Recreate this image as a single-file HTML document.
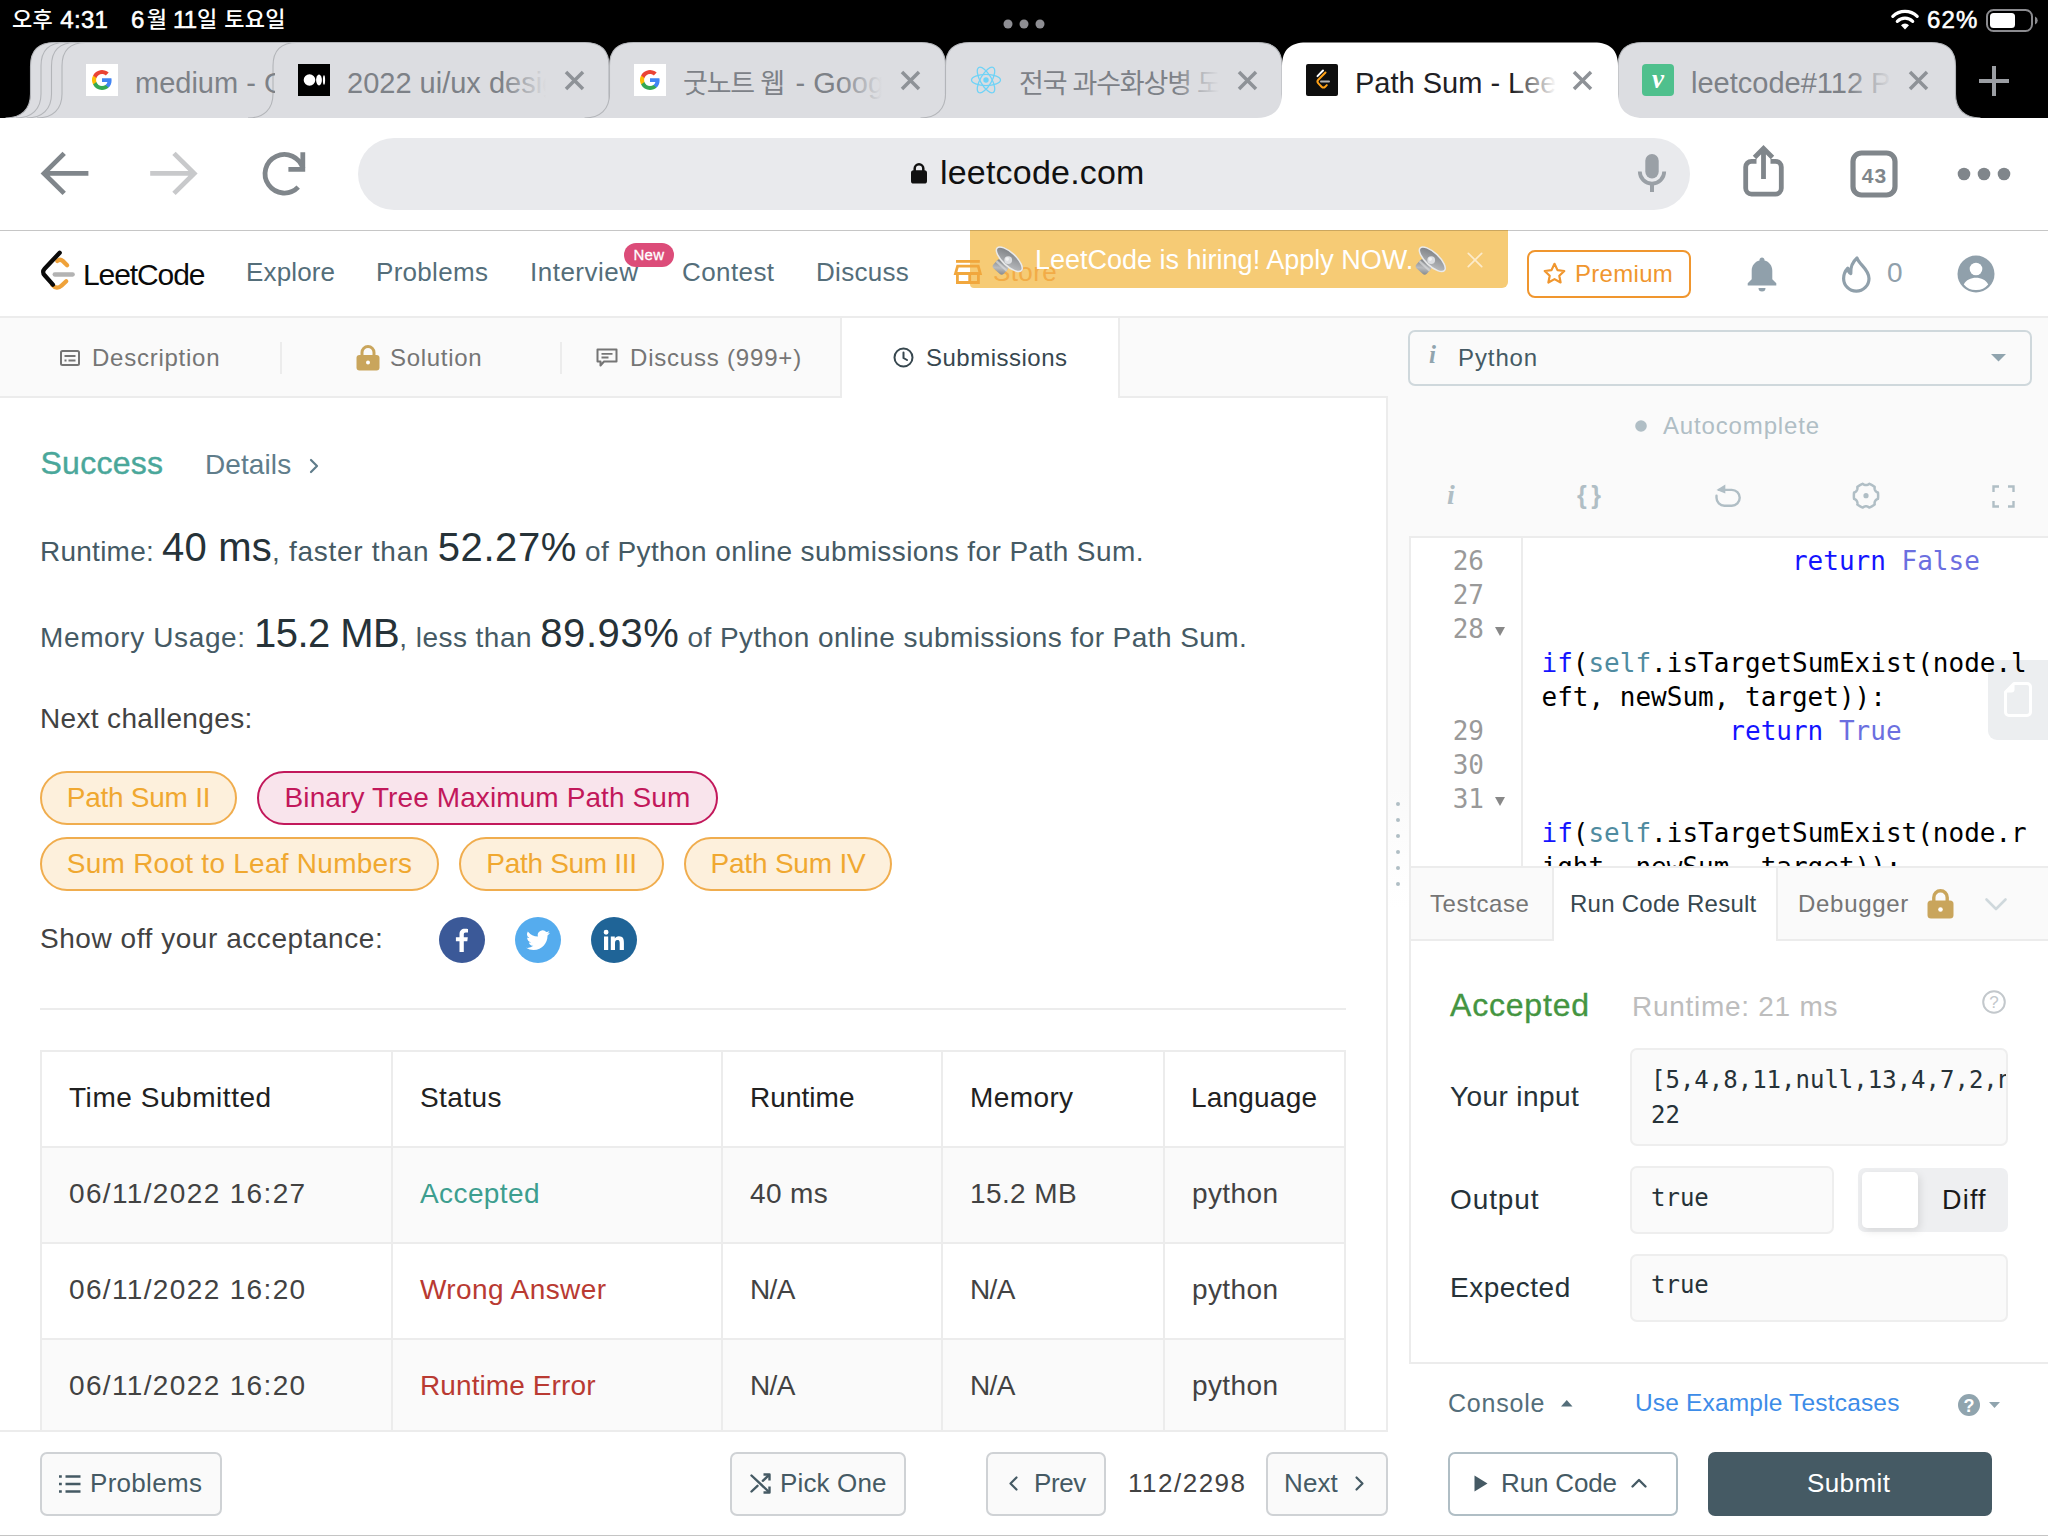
<!DOCTYPE html>
<html lang="ko">
<head>
<meta charset="utf-8">
<title>Path Sum - LeetCode</title>
<style>
*{box-sizing:border-box;margin:0;padding:0}
html,body{width:2048px;height:1536px;overflow:hidden;background:#fff}
body{font-family:"Liberation Sans","Noto Sans CJK KR",sans-serif;color:#263238;position:relative}
.abs{position:absolute}
.t{position:absolute;white-space:nowrap;line-height:1}
svg{position:absolute;overflow:visible}

/* ---------- status bar + tab strip ---------- */
#strip{left:0;top:0;width:2048px;height:118px;background:#000}
.sb{color:#fff;font-size:24px;line-height:32px;word-spacing:-1px}
.sb .ko{font-size:22px;font-weight:500;letter-spacing:.15px;position:relative;top:-1px}
.sb .dg{font-size:24px;-webkit-text-stroke:.55px #fff;letter-spacing:.3px}
.tab{position:absolute;top:42px;height:76px;width:337px}
.tab .fav{position:absolute;left:24px;top:22px;width:32px;height:32px}
.tab .tt{position:absolute;left:73px;top:22.500px;font-size:29px;line-height:36px;color:#7d8187;white-space:nowrap;width:205px;overflow:hidden}
.tab.act .tt{color:#1f2124}
.tab .tt .ko{font-size:27px;letter-spacing:-1.200px}
.tab .fade{position:absolute;left:230px;top:10px;width:52px;height:56px;background:linear-gradient(90deg,rgba(220,221,225,0),#dcdde1 85%)}
.tab.act .fade{background:linear-gradient(90deg,rgba(255,255,255,0),#fff 85%)}
.tab .x{left:291px;top:28px;width:21px;height:21px}
.tab .x path{stroke:#8e9297;stroke-width:3.500;stroke-linecap:butt;fill:none}

/* ---------- toolbar ---------- */
#toolbar{left:0;top:118px;width:2048px;height:113px;background:#fff;border-bottom:1px solid #c6c6c6}
#url{left:358px;top:138px;width:1332px;height:72px;border-radius:36px;background:#e9eaed}

/* ---------- leetcode navbar ---------- */
#lcnav{left:0;top:231px;width:2048px;height:87px;background:#fff;border-bottom:2px solid #ececec}
#lcword{font-size:30px;line-height:34px;color:#0a0a0a;letter-spacing:-1.1px}
.nv{top:257px;font-size:26px;line-height:30px;color:#546e7a}
#newbadge{left:624px;top:243px;width:50px;height:24px;border-radius:12px;background:#dc4c79;color:#fff;font-size:15px;line-height:24px;text-align:center;letter-spacing:.4px;-webkit-text-stroke:.3px #fff}
#banner{left:970px;top:230px;width:538px;height:58px;background:#f6cb75;border-radius:0 0 6px 4px;border-top:1.500px solid #cba65e}
#premium{left:1527px;top:249.500px;width:163.500px;height:48px;border:2.300px solid #f0962e;border-radius:8px}
/* ---------- problem tabs ---------- */
#ptabs{left:0;top:318px;width:1388px;height:80px;background:#fafafa;border-bottom:2px solid #ececec}
#ptabAct{left:840px;top:318px;width:280px;height:80px;background:#fff;border-left:2px solid #ececec;border-right:2px solid #ececec}
.vdiv{top:342px;width:2px;height:32px;background:#ececec}
.pt{top:344px;font-size:24px;line-height:28px;color:#757575}

/* ---------- left pane ---------- */
#leftpane{left:0;top:398px;width:1388px;height:1034px;background:#fff;border-right:2px solid #ececec}
.ln{font-size:28px;line-height:48px;color:#455a64;letter-spacing:.25px}
.ln b{font-weight:normal;font-size:40px;color:#263238;letter-spacing:.2px}
.pill{height:54px;border-radius:27px;border:2px solid #f0ad4e;background:#fdf0dc;color:#f0a830;font-size:28px;line-height:50px;text-align:center;white-space:nowrap;letter-spacing:.1px}
.pill.pk{border-color:#c2185b;background:#f9e4ec;color:#c2185b}
#tbl{left:40px;top:1050px;width:1306px;height:382px;overflow:hidden;border-left:2px solid #ececec;border-top:2px solid #ececec}
.tr{display:flex;height:96px;background:#fff;border-bottom:2px solid #ececec}
.tr.odd{background:#fafafa}
.td{height:96px;border-right:2px solid #ececec;padding-left:27px;font-size:28px;line-height:92px;color:#424242;white-space:nowrap;letter-spacing:.4px}
.th .td{color:#212121}
.c1{width:351px}.c2{width:330px}.c3{width:220px}.c4{width:222px}.c5{width:181px}
.dt{letter-spacing:1.35px}
.ac{color:#3d9e8f}.wa{color:#b93a32}

/* ---------- right pane ---------- */
#rightbg{left:1388px;top:318px;width:660px;height:1114px;background:linear-gradient(180deg,#fafafa 0,#fafafa 470px,#fff 590px,#fff 100%)}
#langsel{left:1408px;top:330px;width:624px;height:56px;border:2px solid #cfd8dc;border-radius:7px;background:#fafafa}
#editor{left:1409px;top:536px;width:660px;height:332px;background:#fff;border:2px solid #ececec;overflow:hidden}
#gutter{left:0;top:0;width:112px;height:340px;border-right:2px solid #ececec;background:#fff}
.gl,.cl{font-family:"DejaVu Sans Mono","Liberation Mono",monospace;font-size:26px;line-height:34px;white-space:pre}
.gl{left:0;width:73px;text-align:right;color:#999}
.fold{left:84px;width:0;height:0;border-left:5px solid transparent;border-right:5px solid transparent;border-top:9px solid #888}
.cl{left:130.500px;color:#000}
.kw{color:#1414ff}.cn{color:#6b6fe0}.sf{color:#4f8ba0}
#copybtn{left:577px;top:122px;width:70px;height:80px;background:#eceef0;border-radius:9px}

/* ---------- console ---------- */
#ctabs{left:1409px;top:866px;width:660px;height:75px;background:#fafafa;border:2px solid #ececec}
#ctabAct{left:1552px;top:868px;width:226px;height:75px;background:#fff;border-left:2px solid #ececec;border-right:2px solid #ececec}
#cpanel{left:1409px;top:941px;width:660px;height:423px;background:#fff;border-left:2px solid #ececec;border-bottom:2px solid #ececec}
.rl{font-size:28px;line-height:32px;color:#263238}
.box{background:#fafafa;border:2px solid #eeeeee;border-radius:7px}
.mono{font-family:"DejaVu Sans Mono","Liberation Mono",monospace;font-size:24px;line-height:36px;color:#263238}
#diff{left:1858px;top:1168px;width:150px;height:64px;background:#eeeff1;border-radius:7px}
#knob{left:1862px;top:1172px;width:56px;height:56px;background:#fff;border-radius:5px;box-shadow:2px 3px 8px rgba(0,0,0,.10)}
#cfoot{left:1388px;top:1364px;width:659px;height:68px;background:#fff}
/* ---------- bottom bar ---------- */
#bbar{left:0;top:1432px;width:2048px;height:104px;background:#fff}
#bbarline{left:0;top:1430px;width:1388px;height:2px;background:#ececec}
.btn{top:1452px;height:64px;background:#fafafa;border:2px solid #cfd2d5;border-radius:7px}
.bt{top:1466.500px;font-size:26px;line-height:32px;color:#455a64}
#runbtn{left:1448px;top:1452px;width:230px;height:64px;background:#fff;border:2px solid #b0bec5;border-radius:7px}
#submit{left:1708px;top:1452px;width:284px;height:64px;background:#455a64;border-radius:7px}
</style>
</head>
<body>

<!-- ================= iOS status bar + Chrome tab strip ================= -->
<div class="abs" id="strip"></div>
<div class="t sb" id="sb1" style="left:12px;top:4px"><span class="ko">오후</span><span class="dg" style="margin-left:7.500px">4:31</span></div>
<div class="t sb" id="sb2" style="left:131px;top:4px"><span class="dg">6</span><span class="ko" style="margin-left:2px">월</span><span class="dg" style="margin-left:6px;letter-spacing:-.9px">11</span><span class="ko" style="margin-left:.8px">일</span><span class="ko" style="margin-left:7px">토요일</span></div>
<svg style="left:1003px;top:19px" width="42" height="10"><circle cx="5" cy="5" r="4.5" fill="#8e8e93"/><circle cx="21" cy="5" r="4.5" fill="#8e8e93"/><circle cx="37" cy="5" r="4.5" fill="#8e8e93"/></svg>
<!-- wifi -->
<svg style="left:1891px;top:9px" width="28" height="21" viewBox="0 0 28 21"><path d="M14 20.5l4-4.3a5.6 5.6 0 0 0-8 0z" fill="#fff"/><path d="M6.3 12.4a10.9 10.9 0 0 1 15.4 0" stroke="#fff" stroke-width="3.2" fill="none" stroke-linecap="round"/><path d="M1.8 7.4a17.3 17.3 0 0 1 24.4 0" stroke="#fff" stroke-width="3.2" fill="none" stroke-linecap="round"/></svg>
<div class="t sb" id="sb3" style="left:1927px;top:4px"><span class="dg" style="letter-spacing:1.100px">62%</span></div>
<!-- battery -->
<svg style="left:1986px;top:9px" width="54" height="23" viewBox="0 0 54 23"><rect x="1" y="1" width="45" height="21" rx="6.5" fill="none" stroke="#8b8b8f" stroke-width="2"/><rect x="4" y="4" width="25" height="15" rx="3.5" fill="#fff"/><path d="M49 7.5v8a4.3 4.3 0 0 0 0-8z" fill="#8b8b8f"/></svg>

<!-- tab shapes -->
<svg style="left:0;top:42px" width="2048" height="76" viewBox="0 0 2048 76"><path d="M5.5 76C21.5 76 30.5 67 30.5 52V24C30.5 8 38.5 0.500 54.5 0.500H176C192 0.500 200 8 200 24V52C200 67 209 76 225 76" fill="#dcdde1" stroke="#b3b5b9" stroke-width="1.100"/><path d="M16 76C32 76 41 67 41 52V24C41 8 49 0.500 65 0.500H186C202 0.500 210 8 210 24V52C210 67 219 76 235 76" fill="#dcdde1" stroke="#b3b5b9" stroke-width="1.100"/><path d="M26.5 76C42.5 76 51.5 67 51.5 52V24C51.5 8 59.5 0.500 75.5 0.500H196C212 0.500 220 8 220 24V52C220 67 229 76 245 76" fill="#dcdde1" stroke="#b3b5b9" stroke-width="1.100"/><path d="M37 76C53 76 62 67 62 52V24C62 8 70 0.500 86 0.500H376C392 0.500 400 8 400 24V52C400 67 409 76 425 76" fill="#dcdde1" stroke="#b3b5b9" stroke-width="1.100"/><path d="M248 76C264 76 273 67 273 52V24C273 8 281 0.500 297 0.500H585C601 0.500 609 8 609 24V52C609 67 618 76 634 76" fill="#dcdde1" stroke="#b3b5b9" stroke-width="1.100"/><path d="M584.5 76C600.5 76 609.5 67 609.5 52V24C609.5 8 617.5 0.500 633.5 0.500H921.5C937.5 0.500 945.5 8 945.5 24V52C945.5 67 954.5 76 970.5 76" fill="#dcdde1" stroke="#b3b5b9" stroke-width="1.100"/><path d="M920.5 76C936.5 76 945.5 67 945.5 52V24C945.5 8 953.5 0.500 969.5 0.500H1258C1274 0.500 1282 8 1282 24V52C1282 67 1291 76 1307 76" fill="#dcdde1" stroke="#b3b5b9" stroke-width="1.100"/><path d="M1593 76C1609 76 1618 67 1618 52V24C1618 8 1626 0.500 1642 0.500H1931.5C1947.5 0.500 1955.5 8 1955.5 24V52C1955.5 67 1964.5 76 1980.5 76" fill="#dcdde1" stroke="#b3b5b9" stroke-width="1.100"/><path d="M1257 76C1273 76 1282 67 1282 52V24C1282 8 1290 0.500 1306 0.500H1594C1610 0.500 1618 8 1618 24V52C1618 67 1627 76 1643 76" fill="#fff"/></svg>
<div class="tab" style="left:56px;width:222px">
  <svg class="fav" style="left:30px" viewBox="0 0 32 32"><rect width="32" height="32" fill="#fff"/><path d="M25.6 16.2c0-.7-.1-1.4-.2-2H16v3.9h5.4a4.6 4.6 0 0 1-2 3v2.5h3.2c1.9-1.7 3-4.300 3-7.400z" fill="#4285f4"/><path d="M16 26c2.700 0 5-.9 6.600-2.400l-3.200-2.500c-.9.600-2 1-3.400 1-2.600 0-4.800-1.800-5.600-4.100H7.100v2.600A10 10 0 0 0 16 26z" fill="#34a853"/><path d="M10.400 18a6 6 0 0 1 0-3.900v-2.600H7.100a10 10 0 0 0 0 9z" fill="#fbbc05"/><path d="M16 10c1.500 0 2.800.5 3.800 1.500l2.900-2.900A10 10 0 0 0 7.100 11.500l3.300 2.600C11.200 11.700 13.400 10 16 10z" fill="#ea4335"/></svg>
  <div class="tt" style="left:79px;width:140px">medium - G</div>
</div>
<div class="tab" style="left:272px">
  <svg class="fav" style="left:26px" viewBox="0 0 32 32"><rect width="32" height="32" fill="#000"/><ellipse cx="11.500" cy="16" rx="5.800" ry="5.800" fill="#fff"/><ellipse cx="21" cy="16" rx="2.900" ry="5.400" fill="#fff"/><ellipse cx="26" cy="16" rx="1.100" ry="4.800" fill="#fff"/></svg>
  <div class="tt" style="left:75px">2022 ui/ux design</div><div class="fade"></div>
  <svg class="x" style="left:291.5px" viewBox="0 0 21 21"><path d="M2 2l17 17M19 2L2 19"/></svg>
</div>
<div class="tab" style="left:608px">
  <svg class="fav" style="left:26px" viewBox="0 0 32 32"><rect width="32" height="32" fill="#fff"/><path d="M25.600 16.200c0-.7-.1-1.400-.2-2H16v3.900h5.400a4.600 4.600 0 0 1-2 3v2.500h3.200c1.900-1.700 3-4.300 3-7.400z" fill="#4285f4"/><path d="M16 26c2.700 0 5-.9 6.600-2.400l-3.200-2.500c-.9.600-2 1-3.400 1-2.600 0-4.800-1.800-5.600-4.100H7.100v2.600A10 10 0 0 0 16 26z" fill="#34a853"/><path d="M10.400 18a6 6 0 0 1 0-3.900v-2.600H7.100a10 10 0 0 0 0 9z" fill="#fbbc05"/><path d="M16 10c1.500 0 2.800.5 3.800 1.500l2.900-2.900A10 10 0 0 0 7.100 11.500l3.300 2.600C11.200 11.700 13.400 10 16 10z" fill="#ea4335"/></svg>
  <div class="tt" style="left:75px"><span class="ko">굿노트 웹</span><span class="la" style="margin-left:3.500px"> - Google</span></div><div class="fade"></div>
  <svg class="x" style="left:291.5px" viewBox="0 0 21 21"><path d="M2 2l17 17M19 2L2 19"/></svg>
</div>
<div class="tab" style="left:945px">
  <svg class="fav" style="left:25px" viewBox="0 0 32 32"><g fill="none" stroke="#6fd3f7" stroke-width="1.300"><ellipse cx="16" cy="16" rx="14.500" ry="5.600"/><ellipse cx="16" cy="16" rx="14.500" ry="5.600" transform="rotate(60 16 16)"/><ellipse cx="16" cy="16" rx="14.500" ry="5.600" transform="rotate(120 16 16)"/></g><circle cx="16" cy="16" r="2.700" fill="#6fd3f7"/></svg>
  <div class="tt" style="left:74px"><span class="ko">전국 과수화상병 도</span></div><div class="fade"></div>
  <svg class="x" style="left:291.5px" viewBox="0 0 21 21"><path d="M2 2l17 17M19 2L2 19"/></svg>
</div>
<div class="tab" style="left:1618px">
  <svg class="fav" style="left:24px" viewBox="0 0 32 32"><rect width="32" height="32" rx="4" fill="#4fc08d"/><text x="16" y="24" font-family="Liberation Serif,serif" font-style="italic" font-weight="bold" font-size="27" fill="#fff" text-anchor="middle">v</text></svg>
  <div class="tt" style="left:73px">leetcode#112 Path</div><div class="fade"></div>
  <svg class="x" style="left:290px" viewBox="0 0 21 21"><path d="M2 2l17 17M19 2L2 19"/></svg>
</div>
<div class="tab act" style="left:1282px;width:336px">
  <svg class="fav" style="left:24px" viewBox="0 0 32 32"><rect width="32" height="32" rx="2" fill="#0e0e0e"/><path d="M19.500 8.500l-7.200 7.300a2.600 2.600 0 0 0 0 3.600l3.300 3.300a2.600 2.600 0 0 0 3.600 0l1.600-1.600" fill="none" stroke="#ffa116" stroke-width="2" stroke-linecap="round"/><path d="M17 6.500l-5.500 5.600" fill="none" stroke="#fff" stroke-width="2" stroke-linecap="round"/><path d="M15 17.500h8" stroke="#b3b3b3" stroke-width="2" stroke-linecap="round"/></svg>
  <div class="tt" style="left:73px">Path Sum - LeetCode</div><div class="fade"></div>
  <svg class="x" style="left:289.5px" viewBox="0 0 21 21"><path d="M2 2l17 17M19 2L2 19"/></svg>
</div>
<!-- new tab + -->
<svg style="left:1978px;top:65px" width="32" height="32"><path d="M16 1v30M1 16h30" stroke="#9b9ea3" stroke-width="4" stroke-linecap="butt"/></svg>

<!-- ================= Chrome toolbar ================= -->
<div class="abs" id="toolbar"></div>
<svg style="left:40px;top:153px" width="49" height="42" viewBox="0 0 49 42"><path d="M24.200 0.400L4 20.400L24.200 40.400M5 20.400H48.400" fill="none" stroke="#80868b" stroke-width="4.800" stroke-linecap="butt" stroke-linejoin="miter"/></svg>
<svg style="left:150px;top:153px" width="49" height="42" viewBox="0 0 49 42"><path d="M24 0.400L44.200 20.400L24 40.400M43.200 20.400H0.200" fill="none" stroke="#c8c9cb" stroke-width="4.800" stroke-linecap="butt" stroke-linejoin="miter"/></svg>
<svg style="left:262px;top:150px" width="46" height="46" viewBox="0 0 46 46"><path d="M41 18.700A19.300 19.300 0 1 0 36.200 37.200" fill="none" stroke="#80868b" stroke-width="4.800" stroke-linecap="butt"/><path d="M40.800 2.200V19.400H26.400" fill="none" stroke="#80868b" stroke-width="4.800" stroke-linecap="butt" stroke-linejoin="miter"/></svg>
<div class="abs" id="url"></div>
<svg style="left:911px;top:162.500px" width="16" height="21" viewBox="0 0 16 21"><rect x="0" y="7.200" width="16" height="13.300" rx="2.600" fill="#111"/><path d="M3.700 8V5.600a4.300 4.300 0 0 1 8.600 0V8" fill="none" stroke="#111" stroke-width="2.500"/></svg>
<div class="t" style="left:940px;top:151.500px;font-size:34px;line-height:40px;color:#111;letter-spacing:.2px">leetcode.com</div>
<!-- mic -->
<svg style="left:1637px;top:154px" width="30" height="40" viewBox="0 0 30 40"><rect x="8.300" y="0" width="13.400" height="24.500" rx="6.700" fill="#9aa0a6"/><path d="M2.800 17.500a12.200 12.200 0 0 0 24.400 0" fill="none" stroke="#9aa0a6" stroke-width="3.800" stroke-linecap="butt"/><path d="M15 30v8" stroke="#9aa0a6" stroke-width="4" stroke-linecap="butt"/></svg>
<!-- share -->
<svg style="left:1742px;top:144px" width="43" height="54" viewBox="0 0 43 54"><path d="M14.500 17.300H9.500a5.800 5.800 0 0 0-5.800 5.800v21.200a5.800 5.800 0 0 0 5.800 5.800h24a5.800 5.800 0 0 0 5.800-5.800V23.100a5.800 5.800 0 0 0-5.800-5.800H28.500" fill="none" stroke="#80868b" stroke-width="4.800" stroke-linecap="butt"/><path d="M21.500 35V5M12.500 13.500l9-9 9 9" fill="none" stroke="#80868b" stroke-width="4.800" stroke-linecap="butt" stroke-linejoin="miter"/></svg>
<!-- tab count -->
<svg style="left:1850px;top:150px" width="48" height="48" viewBox="0 0 48 48"><rect x="3" y="3" width="42" height="42" rx="8.500" fill="none" stroke="#80868b" stroke-width="5.200"/><text x="24.600" y="33" text-anchor="middle" font-family="Liberation Sans,sans-serif" font-weight="bold" font-size="21" letter-spacing="1.200" fill="#80868b">43</text></svg>
<svg style="left:1957px;top:167px" width="54" height="14"><circle cx="7" cy="7" r="6.300" fill="#80868b"/><circle cx="27" cy="7" r="6.300" fill="#80868b"/><circle cx="47" cy="7" r="6.300" fill="#80868b"/></svg>

<!-- ================= LeetCode navbar ================= -->
<div class="abs" id="lcnav"></div>
<!-- logo -->
<svg style="left:40px;top:250px" width="36" height="42" viewBox="0 0 36 42"><path d="M12.200 34.800c2.800 3.600 6.500 3.600 9.200 1l4.800-4.600" fill="none" stroke="#efa23a" stroke-width="4.300" stroke-linecap="round" stroke-linejoin="round"/><path d="M17.300 11c1.700-1.600 3.700-1.600 5.400-.1l4.400 4.300" fill="none" stroke="#efa23a" stroke-width="4.300" stroke-linecap="round" stroke-linejoin="round"/><path d="M19.700 2.700L4.600 18.700c-1.900 2-1.900 4.600 0 6.600l8.300 9.300" fill="none" stroke="#0a0a0a" stroke-width="4.300" stroke-linecap="round" stroke-linejoin="round"/><path d="M14.700 24.500h18" stroke="#b3b3b3" stroke-width="4.300" stroke-linecap="round"/></svg>
<div class="t" id="lcword" style="left:83px;top:258px">LeetCode</div>
<div class="t nv" style="left:246px;letter-spacing:.15px">Explore</div>
<div class="t nv" style="left:376px;letter-spacing:.3px">Problems</div>
<div class="t nv" style="left:530px;letter-spacing:.5px">Interview</div>
<div class="t nv" style="left:682px;letter-spacing:.4px">Contest</div>
<div class="t nv" style="left:816px;letter-spacing:.3px">Discuss</div>
<div class="abs" id="newbadge">New</div>
<div class="abs" id="banner"></div>
<!-- store -->
<svg style="left:954px;top:260px" width="28" height="24" viewBox="0 0 28 24"><g fill="none" stroke="#f1a73d" stroke-width="2.800"><path d="M2 1.400h23.800"/><path d="M3.600 6.100h20.600l2.100 7.400H1.500z" stroke-linejoin="miter"/><path d="M3.400 14v8.500h21V14M15.700 14v8.500"/></g></svg>
<div class="t nv" style="left:993px;color:#f2ac47;letter-spacing:.4px">Store</div>
<!-- hiring banner -->
<svg style="left:992px;top:244px" width="32" height="32" viewBox="0 0 32 32"><defs><linearGradient id="e1a" x1="0" y1="0" x2="1" y2="1"><stop offset="0" stop-color="#74777b"/><stop offset="1" stop-color="#c3c5c8"/></linearGradient><linearGradient id="e1b" x1="0" y1="0" x2="1" y2="1"><stop offset="0" stop-color="#7b7e82"/><stop offset=".55" stop-color="#b9bbbe"/><stop offset="1" stop-color="#808387"/></linearGradient></defs><g transform="rotate(43 8.400 23.100)"><rect x="1.400" y="17.600" width="14" height="11" rx="3" fill="url(#e1b)"/><rect x="1.400" y="20.400" width="14" height="2.200" fill="#d9dadc" opacity=".7"/></g><g transform="rotate(43 17.300 15.250)"><ellipse cx="17.300" cy="15.250" rx="16.600" ry="6.600" fill="url(#e1a)" stroke="#e9eaeb" stroke-width="1.500"/></g><circle cx="16.200" cy="16.100" r="3.900" fill="#dcdee1"/><circle cx="15.200" cy="15.100" r="1.800" fill="#f1f2f3"/></svg>
<div class="t" style="left:1035px;top:245px;font-size:27px;line-height:30px;color:#fff;letter-spacing:0">LeetCode is hiring! Apply NOW.</div>
<svg style="left:1415px;top:244px" width="32" height="32" viewBox="0 0 32 32"><defs><linearGradient id="e2a" x1="0" y1="0" x2="1" y2="1"><stop offset="0" stop-color="#74777b"/><stop offset="1" stop-color="#c3c5c8"/></linearGradient><linearGradient id="e2b" x1="0" y1="0" x2="1" y2="1"><stop offset="0" stop-color="#7b7e82"/><stop offset=".55" stop-color="#b9bbbe"/><stop offset="1" stop-color="#808387"/></linearGradient></defs><g transform="rotate(43 8.400 23.100)"><rect x="1.400" y="17.600" width="14" height="11" rx="3" fill="url(#e2b)"/><rect x="1.400" y="20.400" width="14" height="2.200" fill="#d9dadc" opacity=".7"/></g><g transform="rotate(43 17.300 15.250)"><ellipse cx="17.300" cy="15.250" rx="16.600" ry="6.600" fill="url(#e2a)" stroke="#e9eaeb" stroke-width="1.500"/></g><circle cx="16.200" cy="16.100" r="3.900" fill="#dcdee1"/><circle cx="15.200" cy="15.100" r="1.800" fill="#f1f2f3"/></svg>
<svg style="left:1467px;top:252px" width="16" height="16"><path d="M1.300 1.300l13.400 13.400M14.700 1.300L1.300 14.700" stroke="#fff" stroke-opacity=".62" stroke-width="1.700" stroke-linecap="round"/></svg>
<!-- premium -->
<div class="abs" id="premium"></div>
<svg style="left:1543px;top:262px" width="23" height="22" viewBox="0 0 23 22"><path d="M11.500 1.800l3 6.300 6.800.9-5 4.700 1.300 6.800-6.100-3.400-6.100 3.400 1.300-6.800-5-4.700 6.800-.9z" fill="none" stroke="#f0962e" stroke-width="2.200" stroke-linejoin="round"/></svg>
<div class="t" style="left:1575px;top:260px;font-size:24px;line-height:28px;color:#f0962e;letter-spacing:.3px">Premium</div>
<!-- bell -->
<svg style="left:1746px;top:256px" width="32" height="37" viewBox="0 0 32 37"><path d="M16 1.500c1.400 0 2.500 1 2.500 2.300v.8c4.700 1.100 7.800 5.200 7.800 10.200v8.400l4 4.100v2.200H1.700v-2.200l4-4.100v-8.400c0-5 3.100-9.100 7.800-10.200v-.8c0-1.300 1.100-2.300 2.500-2.300z" fill="#90a0ab"/><path d="M12.500 32h7a3.500 3.500 0 0 1-7 0z" fill="#90a0ab"/></svg>
<!-- fire -->
<svg style="left:1840px;top:256px" width="32" height="36" viewBox="0 0 32 36"><path d="M17 2c2 6.500 12 11 12 20.500a12.700 12.700 0 0 1-25.400 0c0-4.300 1.700-7.600 4.200-10.300.3 2.600 1.400 4.400 3 5.300C10.300 11.500 12.500 6 17 2z" fill="none" stroke="#90a0ab" stroke-width="3.200" stroke-linejoin="round"/></svg>
<div class="t" style="left:1887px;top:257px;font-size:28px;line-height:32px;color:#90a0ab">0</div>
<!-- avatar -->
<svg style="left:1957px;top:255px" width="38" height="38" viewBox="0 0 38 38"><circle cx="19" cy="19" r="18.500" fill="#90a0ab"/><circle cx="19" cy="14" r="6.300" fill="#fff"/><path d="M6.800 29.500c2.300-4.600 7-6.700 12.200-6.700s9.900 2.100 12.200 6.700A15.500 15.500 0 0 1 19 35a15.500 15.500 0 0 1-12.200-5.500z" fill="#fff"/></svg>

<!-- ================= problem tabs row ================= -->
<div class="abs" id="ptabs"></div>
<div class="abs" id="ptabAct"></div>
<div class="abs vdiv" style="left:280px"></div>
<div class="abs vdiv" style="left:560px"></div>
<svg style="left:60px;top:350px" width="20" height="16" viewBox="0 0 20 16"><rect x="1" y="1" width="18" height="14" rx="1.500" fill="none" stroke="#757575" stroke-width="2"/><path d="M4.500 6h11M4.500 10.500h2M8.500 10.500h7" stroke="#757575" stroke-width="2"/></svg>
<div class="t pt" style="left:92px;letter-spacing:.75px">Description</div>
<svg style="left:356px;top:345px" width="24" height="26" viewBox="0 0 24 26"><rect x="0.500" y="10" width="23" height="15.500" rx="3" fill="#c9a55c"/><path d="M6 11V7.500a6 6 0 0 1 12 0V11" fill="none" stroke="#c9a55c" stroke-width="3"/><circle cx="12" cy="17.500" r="2" fill="#fff"/></svg>
<div class="t pt" style="left:390px;letter-spacing:.7px">Solution</div>
<svg style="left:596px;top:348px" width="22" height="20" viewBox="0 0 22 20"><path d="M1.500 1.500h19v12h-12.500l-3.500 4v-4h-3z" fill="none" stroke="#757575" stroke-width="2" stroke-linejoin="round"/><path d="M5.500 5.800h11M5.500 9.500h7" stroke="#757575" stroke-width="1.800"/></svg>
<div class="t pt" style="left:630px;letter-spacing:.8px">Discuss (999+)</div>
<svg style="left:893px;top:347px" width="21" height="21" viewBox="0 0 21 21"><circle cx="10.500" cy="10.500" r="9" fill="none" stroke="#37474f" stroke-width="2"/><path d="M10.500 5.500v5.500l3.500 2" fill="none" stroke="#37474f" stroke-width="2" stroke-linecap="round"/></svg>
<div class="t pt" style="left:926px;color:#37474f;letter-spacing:.5px">Submissions</div>

<!-- ================= left panel : submission result ================= -->
<div class="abs" id="leftpane"></div>
<div class="t" style="left:40.500px;top:445px;font-size:32px;line-height:36px;color:#4aa79a;letter-spacing:.25px;-webkit-text-stroke:.4px #4aa79a">Success</div>
<div class="t" style="left:205px;top:449px;font-size:28px;line-height:32px;color:#607d8b;letter-spacing:.1px">Details</div>
<svg style="left:309px;top:458px" width="10" height="16"><path d="M2 2l6 6-6 6" fill="none" stroke="#607d8b" stroke-width="2.200" stroke-linecap="round" stroke-linejoin="round"/></svg>

<div class="t ln" id="rt1" style="left:40px;top:523px"><span>Runtime: </span><b>40 ms</b><span style="letter-spacing:.72px">, faster than </span><b style="letter-spacing:.57px">52.27%</b><span style="letter-spacing:.41px"> of Python online submissions for Path Sum.</span></div>
<div class="t ln" id="rt2" style="left:40px;top:609px"><span style="letter-spacing:.62px">Memory Usage: </span><b style="letter-spacing:-.55px">15.2 MB</b><span style="letter-spacing:.47px">, less than </span><b style="letter-spacing:.57px">89.93%</b><span style="letter-spacing:.43px"> of Python online submissions for Path Sum.</span></div>

<div class="t" style="left:40px;top:703px;font-size:28px;line-height:32px;color:#424242;letter-spacing:.35px">Next challenges:</div>

<div class="abs pill" style="left:40px;top:771px;width:197px"><span style="letter-spacing:-.25px">Path Sum II</span></div>
<div class="abs pill pk" style="left:257px;top:771px;width:461px"><span>Binary Tree Maximum Path Sum</span></div>
<div class="abs pill" style="left:40px;top:837px;width:399px"><span style="letter-spacing:.26px">Sum Root to Leaf Numbers</span></div>
<div class="abs pill" style="left:459px;top:837px;width:205px"><span style="letter-spacing:-.3px">Path Sum III</span></div>
<div class="abs pill" style="left:684px;top:837px;width:208px"><span style="letter-spacing:-.2px">Path Sum IV</span></div>

<div class="t" style="left:40px;top:923px;font-size:28px;line-height:32px;color:#424242;letter-spacing:.55px">Show off your acceptance:</div>
<!-- facebook -->
<svg style="left:439px;top:917px" width="46" height="46" viewBox="0 0 46 46"><circle cx="23" cy="23" r="23" fill="#3b5998"/><path d="M24.800 35V24.300h3.500l.5-4.100h-4v-2.600c0-1.200.3-2 2-2h2.200v-3.700c-.4 0-1.700-.2-3.200-.2-3.200 0-5.300 1.900-5.300 5.500v3h-3.600v4.100h3.600V35z" fill="#fff"/></svg>
<!-- twitter -->
<svg style="left:515px;top:917px" width="46" height="46" viewBox="0 0 46 46"><circle cx="23" cy="23" r="23" fill="#55acee"/><path d="M35 15.800c-.9.400-1.800.7-2.800.8a5 5 0 0 0 2.200-2.700c-1 .6-2 1-3.100 1.200a4.900 4.900 0 0 0-8.400 4.500 13.900 13.900 0 0 1-10.100-5.100 4.900 4.900 0 0 0 1.500 6.500c-.8 0-1.600-.2-2.200-.6 0 2.400 1.700 4.400 3.900 4.900-.7.200-1.500.2-2.200.1a4.900 4.900 0 0 0 4.600 3.400A9.900 9.900 0 0 1 11 30.800a13.900 13.900 0 0 0 7.500 2.200c9 0 14-7.500 14-14v-.6c1-.7 1.800-1.600 2.500-2.600z" fill="#fff"/></svg>
<!-- linkedin -->
<svg style="left:591px;top:917px" width="46" height="46" viewBox="0 0 46 46"><circle cx="23" cy="23" r="23" fill="#1f6497"/><path d="M13 19.500h4.200V33H13zM15.100 12.800a2.400 2.400 0 1 1 0 4.900 2.400 2.400 0 0 1 0-4.900zM19.800 19.500h4v1.900c.6-1.100 2-2.200 4-2.200 4.300 0 5.100 2.800 5.100 6.500V33h-4.200v-6.500c0-1.600 0-3.600-2.200-3.600s-2.500 1.700-2.500 3.500V33h-4.200z" fill="#fff"/></svg>

<div class="abs" style="left:40px;top:1008px;width:1306px;height:2px;background:#ececec"></div>

<!-- submissions table -->
<div class="abs" id="tbl">
  <div class="tr th"><div class="td c1" style="letter-spacing:.55px">Time Submitted</div><div class="td c2">Status</div><div class="td c3" style="letter-spacing:.05px">Runtime</div><div class="td c4">Memory</div><div class="td c5" style="letter-spacing:.2px;padding-left:26px">Language</div></div>
  <div class="tr odd"><div class="td c1 dt">06/11/2022 16:27</div><div class="td c2 ac">Accepted</div><div class="td c3">40 ms</div><div class="td c4">15.2 MB</div><div class="td c5">python</div></div>
  <div class="tr"><div class="td c1 dt">06/11/2022 16:20</div><div class="td c2 wa">Wrong Answer</div><div class="td c3" style="letter-spacing:-.6px">N/A</div><div class="td c4" style="letter-spacing:-.6px">N/A</div><div class="td c5">python</div></div>
  <div class="tr odd"><div class="td c1 dt">06/11/2022 16:20</div><div class="td c2 wa" style="letter-spacing:.1px">Runtime Error</div><div class="td c3" style="letter-spacing:-.6px">N/A</div><div class="td c4" style="letter-spacing:-.6px">N/A</div><div class="td c5">python</div></div>
</div>

<!-- ================= right panel : editor ================= -->
<div class="abs" id="rightbg"></div>
<div class="abs" id="langsel"></div>
<div class="t" style="left:1429px;top:341px;font-family:'Liberation Serif',serif;font-style:italic;font-weight:bold;font-size:25px;line-height:28px;color:#90a4ae">i</div>
<div class="t" style="left:1458px;top:344px;font-size:24px;line-height:28px;color:#455a64;letter-spacing:.9px">Python</div>
<svg style="left:1991px;top:354px" width="16" height="8"><path d="M0 0h15l-7.500 7.500z" fill="#90a4ae"/></svg>

<svg style="left:1635px;top:420px" width="12" height="12"><circle cx="6" cy="6" r="5.800" fill="#b0bec5"/></svg>
<div class="t" style="left:1663px;top:412px;font-size:24px;line-height:28px;color:#b0bec5;letter-spacing:.85px">Autocomplete</div>

<!-- editor toolbar icons -->
<div class="t" style="left:1447px;top:480px;font-family:'Liberation Serif',serif;font-style:italic;font-weight:bold;font-size:28px;line-height:30px;color:#b0bec5">i</div>
<div class="t" style="left:1577px;top:481px;font-weight:bold;font-size:25px;line-height:28px;color:#b0bec5;letter-spacing:4.500px">{}</div>
<svg style="left:1715px;top:484px" width="26" height="24" viewBox="0 0 26 24"><path d="M4 5.900H16.800A7.900 7.900 0 0 1 16.800 21.700H9.400A7.900 7.900 0 0 1 1.500 13.800V11.800" fill="none" stroke="#b0bec5" stroke-width="2.400" stroke-linecap="round"/><path d="M1.500 5.900L10.300 0.500V9.500z" fill="#b0bec5"/></svg>
<svg style="left:1852px;top:482px" width="28" height="28" viewBox="0 0 28 28"><path d="M14.00 3.10 L14.19 3.10 L14.37 3.09 L14.56 3.07 L14.75 3.04 L14.94 3.00 L15.13 2.96 L15.33 2.90 L15.53 2.84 L15.73 2.76 L15.95 2.67 L16.17 2.56 L16.40 2.43 L16.64 2.27 L16.90 2.07 L17.18 1.82 L17.40 1.84 L17.60 1.93 L17.80 2.02 L17.99 2.11 L18.19 2.20 L18.38 2.29 L18.57 2.39 L18.76 2.48 L18.95 2.58 L19.14 2.68 L19.33 2.78 L19.51 2.88 L19.70 2.98 L19.88 3.09 L20.07 3.19 L20.25 3.30 L20.43 3.41 L20.61 3.52 L20.79 3.63 L20.97 3.74 L21.15 3.85 L21.33 3.97 L21.51 4.09 L21.69 4.21 L21.87 4.33 L22.04 4.45 L22.22 4.57 L22.39 4.70 L22.57 4.83 L22.70 5.00 L22.62 5.37 L22.58 5.70 L22.56 5.99 L22.57 6.25 L22.58 6.50 L22.61 6.73 L22.64 6.95 L22.69 7.15 L22.74 7.35 L22.80 7.54 L22.86 7.72 L22.93 7.90 L23.01 8.07 L23.09 8.24 L23.18 8.40 L23.28 8.56 L23.38 8.71 L23.49 8.87 L23.61 9.02 L23.73 9.16 L23.87 9.31 L24.01 9.45 L24.17 9.59 L24.34 9.73 L24.53 9.87 L24.73 10.00 L24.96 10.14 L25.22 10.27 L25.52 10.40 L25.88 10.52 L25.97 10.72 L25.99 10.93 L26.01 11.15 L26.03 11.36 L26.05 11.58 L26.07 11.79 L26.08 12.00 L26.09 12.22 L26.10 12.43 L26.11 12.64 L26.12 12.85 L26.13 13.06 L26.13 13.28 L26.13 13.49 L26.14 13.70 L26.13 13.91 L26.13 14.12 L26.13 14.34 L26.12 14.55 L26.11 14.76 L26.10 14.97 L26.09 15.18 L26.08 15.40 L26.07 15.61 L26.05 15.82 L26.03 16.04 L26.01 16.25 L25.99 16.47 L25.97 16.68 L25.88 16.88 L25.52 17.00 L25.22 17.13 L24.96 17.26 L24.73 17.40 L24.53 17.53 L24.34 17.67 L24.17 17.81 L24.01 17.95 L23.87 18.09 L23.73 18.24 L23.61 18.38 L23.49 18.53 L23.38 18.69 L23.28 18.84 L23.18 19.00 L23.09 19.16 L23.01 19.33 L22.93 19.50 L22.86 19.68 L22.80 19.86 L22.74 20.05 L22.69 20.25 L22.64 20.45 L22.61 20.67 L22.58 20.90 L22.57 21.15 L22.56 21.41 L22.58 21.70 L22.62 22.03 L22.70 22.40 L22.57 22.57 L22.39 22.70 L22.22 22.83 L22.04 22.95 L21.87 23.07 L21.69 23.19 L21.51 23.31 L21.33 23.43 L21.15 23.55 L20.97 23.66 L20.79 23.77 L20.61 23.88 L20.43 23.99 L20.25 24.10 L20.07 24.21 L19.88 24.31 L19.70 24.42 L19.51 24.52 L19.33 24.62 L19.14 24.72 L18.95 24.82 L18.76 24.92 L18.57 25.01 L18.38 25.11 L18.19 25.20 L17.99 25.29 L17.80 25.38 L17.60 25.47 L17.40 25.56 L17.18 25.58 L16.90 25.33 L16.64 25.13 L16.40 24.97 L16.17 24.84 L15.95 24.73 L15.73 24.64 L15.53 24.56 L15.33 24.50 L15.13 24.44 L14.94 24.40 L14.75 24.36 L14.56 24.33 L14.37 24.31 L14.19 24.30 L14.00 24.30 L13.81 24.30 L13.63 24.31 L13.44 24.33 L13.25 24.36 L13.06 24.40 L12.87 24.44 L12.67 24.50 L12.47 24.56 L12.27 24.64 L12.05 24.73 L11.83 24.84 L11.60 24.97 L11.36 25.13 L11.10 25.33 L10.82 25.58 L10.60 25.56 L10.40 25.47 L10.20 25.38 L10.01 25.29 L9.81 25.20 L9.62 25.11 L9.43 25.01 L9.24 24.92 L9.05 24.82 L8.86 24.72 L8.67 24.62 L8.49 24.52 L8.30 24.42 L8.12 24.31 L7.93 24.21 L7.75 24.10 L7.57 23.99 L7.39 23.88 L7.21 23.77 L7.03 23.66 L6.85 23.55 L6.67 23.43 L6.49 23.31 L6.31 23.19 L6.13 23.07 L5.96 22.95 L5.78 22.83 L5.61 22.70 L5.43 22.57 L5.30 22.40 L5.38 22.03 L5.42 21.70 L5.44 21.41 L5.43 21.15 L5.42 20.90 L5.39 20.67 L5.36 20.45 L5.31 20.25 L5.26 20.05 L5.20 19.86 L5.14 19.68 L5.07 19.50 L4.99 19.33 L4.91 19.16 L4.82 19.00 L4.72 18.84 L4.62 18.69 L4.51 18.53 L4.39 18.38 L4.27 18.24 L4.13 18.09 L3.99 17.95 L3.83 17.81 L3.66 17.67 L3.47 17.53 L3.27 17.40 L3.04 17.26 L2.78 17.13 L2.48 17.00 L2.12 16.88 L2.03 16.68 L2.01 16.47 L1.99 16.25 L1.97 16.04 L1.95 15.82 L1.93 15.61 L1.92 15.40 L1.91 15.18 L1.90 14.97 L1.89 14.76 L1.88 14.55 L1.87 14.34 L1.87 14.12 L1.87 13.91 L1.86 13.70 L1.87 13.49 L1.87 13.28 L1.87 13.06 L1.88 12.85 L1.89 12.64 L1.90 12.43 L1.91 12.22 L1.92 12.00 L1.93 11.79 L1.95 11.58 L1.97 11.36 L1.99 11.15 L2.01 10.93 L2.03 10.72 L2.12 10.52 L2.48 10.40 L2.78 10.27 L3.04 10.14 L3.27 10.00 L3.47 9.87 L3.66 9.73 L3.83 9.59 L3.99 9.45 L4.13 9.31 L4.27 9.16 L4.39 9.02 L4.51 8.87 L4.62 8.71 L4.72 8.56 L4.82 8.40 L4.91 8.24 L4.99 8.07 L5.07 7.90 L5.14 7.72 L5.20 7.54 L5.26 7.35 L5.31 7.15 L5.36 6.95 L5.39 6.73 L5.42 6.50 L5.43 6.25 L5.44 5.99 L5.42 5.70 L5.38 5.37 L5.30 5.00 L5.43 4.83 L5.61 4.70 L5.78 4.57 L5.96 4.45 L6.13 4.33 L6.31 4.21 L6.49 4.09 L6.67 3.97 L6.85 3.85 L7.03 3.74 L7.21 3.63 L7.39 3.52 L7.57 3.41 L7.75 3.30 L7.93 3.19 L8.12 3.09 L8.30 2.98 L8.49 2.88 L8.67 2.78 L8.86 2.68 L9.05 2.58 L9.24 2.48 L9.43 2.39 L9.62 2.29 L9.81 2.20 L10.01 2.11 L10.20 2.02 L10.40 1.93 L10.60 1.84 L10.82 1.82 L11.10 2.07 L11.36 2.27 L11.60 2.43 L11.83 2.56 L12.05 2.67 L12.27 2.76 L12.47 2.84 L12.67 2.90 L12.87 2.96 L13.06 3.00 L13.25 3.04 L13.44 3.07 L13.63 3.09 L13.81 3.10z" fill="none" stroke="#b0bec5" stroke-width="2.500" stroke-linejoin="round"/><circle cx="14" cy="13.700" r="2.600" fill="#b0bec5"/></svg>
<svg style="left:1992px;top:485px" width="23" height="23" viewBox="0 0 23 23"><path d="M1.500 7V1.500H7M16 1.500h5.500V7M21.500 16v5.500H16M7 21.500H1.500V16" fill="none" stroke="#b0bec5" stroke-width="2.400"/></svg>

<!-- code editor -->
<div class="abs" id="editor">
  <div class="abs" id="copybtn"></div>
  <div class="abs" id="gutter"></div>
  <div class="abs gl" style="top:6px">26</div>
  <div class="abs gl" style="top:40px">27</div>
  <div class="abs gl" style="top:74px">28</div><div class="abs fold" style="top:89px"></div>
  <div class="abs gl" style="top:176px">29</div>
  <div class="abs gl" style="top:210px">30</div>
  <div class="abs gl" style="top:244px">31</div><div class="abs fold" style="top:259px"></div>
  <pre class="abs cl" style="top:6px">                <span class="kw">return</span> <span class="cn">False</span></pre>
  <pre class="abs cl" style="top:108px"><span class="kw">if</span>(<span class="sf">self</span>.isTargetSumExist(node.l</pre>
  <pre class="abs cl" style="top:142px">eft, newSum, target)):</pre>
  <pre class="abs cl" style="top:176px">            <span class="kw">return</span> <span class="cn">True</span></pre>
  <pre class="abs cl" style="top:278px"><span class="kw">if</span>(<span class="sf">self</span>.isTargetSumExist(node.r</pre>
  <pre class="abs cl" style="top:312px">ight, newSum, target)):</pre>
</div>
<!-- floating copy button -->
<svg style="left:2004px;top:682px" width="28" height="35" viewBox="0 0 28 35"><path d="M10 1.500h13a3.500 3.500 0 0 1 3.500 3.500v25a3.500 3.500 0 0 1-3.500 3.500H5a3.500 3.500 0 0 1-3.500-3.500V10z" fill="none" stroke="#fff" stroke-width="3" stroke-linejoin="round"/><path d="M1.500 10.500H7.500a3 3 0 0 0 3-3V1.500z" fill="#fff"/></svg>
<!-- drag handle -->
<svg style="left:1395px;top:800px" width="6" height="90"><g fill="#b0bec5"><circle cx="3" cy="4" r="2"/><circle cx="3" cy="20" r="2"/><circle cx="3" cy="36" r="2"/><circle cx="3" cy="52" r="2"/><circle cx="3" cy="68" r="2"/><circle cx="3" cy="84" r="2"/></g></svg>

<!-- ================= console / run result ================= -->
<div class="abs" id="ctabs"></div>
<div class="abs" id="ctabAct"></div>
<div class="t pt" style="left:1430px;top:890px;letter-spacing:.6px">Testcase</div>
<div class="t pt" style="left:1570px;top:890px;color:#37474f;letter-spacing:.25px">Run Code Result</div>
<div class="t pt" style="left:1798px;top:890px;letter-spacing:.7px">Debugger</div>
<svg style="left:1927px;top:889px" width="27" height="30" viewBox="0 0 27 30"><rect x="0.500" y="11.500" width="26" height="18" rx="3.500" fill="#c9a55c"/><path d="M6.800 12.500V8.500a6.700 6.700 0 0 1 13.400 0v4" fill="none" stroke="#c9a55c" stroke-width="3.400"/><circle cx="13.500" cy="20.500" r="2.300" fill="#fff"/></svg>
<svg style="left:1985px;top:898px" width="22" height="13"><path d="M1.500 1.500l9.500 9.500 9.500-9.500" fill="none" stroke="#cfd8dc" stroke-width="2.600" stroke-linecap="round" stroke-linejoin="round"/></svg>

<div class="abs" id="cpanel"></div>
<div class="t" style="left:1450px;top:987px;font-size:32px;line-height:36px;color:#449541;letter-spacing:.8px;-webkit-text-stroke:.35px #449541">Accepted</div>
<div class="t" style="left:1632px;top:991px;font-size:28px;line-height:32px;color:#bdbdbd;letter-spacing:.72px">Runtime: 21 ms</div>
<svg style="left:1982px;top:990px" width="24" height="24" viewBox="0 0 24 24"><circle cx="12" cy="12" r="10.800" fill="none" stroke="#c3c8cc" stroke-width="2"/><text x="12" y="18" text-anchor="middle" font-family="Liberation Sans,sans-serif" font-size="17" fill="#c3c8cc">?</text></svg>

<div class="t rl" style="left:1450px;top:1081px;letter-spacing:.4px">Your input</div>
<div class="abs box" style="left:1630px;top:1048px;width:378px;height:98px"></div>
<div class="t mono" style="left:1651px;top:1062px;width:355px;overflow:hidden">[5,4,8,11,null,13,4,7,2,null,null,null,1]</div>
<div class="t mono" style="left:1651px;top:1097px">22</div>

<div class="t rl" style="left:1450px;top:1184px;letter-spacing:.9px">Output</div>
<div class="abs box" style="left:1630px;top:1166px;width:204px;height:68px"></div>
<div class="t mono" style="left:1651px;top:1180px">true</div>
<div class="abs" id="diff"></div><div class="abs" id="knob"></div>
<div class="t" style="left:1942px;top:1184px;font-size:27px;line-height:32px;color:#1a1a1a;letter-spacing:1.2px">Diff</div>

<div class="t rl" style="left:1450px;top:1272px;letter-spacing:.5px">Expected</div>
<div class="abs box" style="left:1630px;top:1254px;width:378px;height:68px"></div>
<div class="t mono" style="left:1651px;top:1267px">true</div>

<!-- console footer -->
<div class="abs" id="cfoot"></div>
<div class="t" style="left:1448px;top:1387px;font-size:25px;line-height:32px;color:#546e7a;letter-spacing:.78px">Console</div>
<svg style="left:1561px;top:1400px" width="12" height="7"><path d="M0 6.500h11.500L5.750 0z" fill="#546e7a"/></svg>
<div class="t" style="left:1635px;top:1387px;font-size:24.5px;line-height:32px;color:#3d8ce8;letter-spacing:.17px">Use Example Testcases</div>
<svg style="left:1958px;top:1394px" width="22" height="22" viewBox="0 0 22 22"><circle cx="11" cy="11" r="11" fill="#90a4ae"/><text x="11" y="17.500" text-anchor="middle" font-family="Liberation Sans,sans-serif" font-weight="bold" font-size="18" fill="#fff">?</text></svg>
<svg style="left:1989px;top:1402px" width="12" height="7"><path d="M0 0h11L5.500 6z" fill="#90a4ae"/></svg>

<!-- ================= bottom action bar ================= -->
<div class="abs" id="bbar"></div><div class="abs" id="bbarline"></div>
<div class="abs btn" style="left:40px;width:182px"></div>
<svg style="left:59px;top:1474px" width="22" height="20"><g stroke="#455a64" stroke-width="2.400"><path d="M6.500 2.500h15M6.500 10h15M6.500 17.500h15"/><path d="M0 2.500h2.800M0 10h2.800M0 17.500h2.800"/></g></svg>
<div class="t bt" style="left:90px;letter-spacing:.3px">Problems</div>
<div class="abs btn" style="left:730px;width:176px"></div>
<svg style="left:750px;top:1473px" width="21" height="21" viewBox="0 0 21 21"><path d="M1.500 2.500l17 16M1.500 18.500l6-5.700M12.800 7.800l5.700-5.300" fill="none" stroke="#455a64" stroke-width="2.400" stroke-linecap="round"/><path d="M13.500 1.500h6v6M13.500 19.500h6v-6" fill="none" stroke="#455a64" stroke-width="2.400" stroke-linejoin="round"/></svg>
<div class="t bt" style="left:780px;letter-spacing:.15px">Pick One</div>
<div class="abs btn" style="left:986px;width:120px"></div>
<svg style="left:1009px;top:1476px" width="9" height="15"><path d="M7.500 1.500l-6 6 6 6" fill="none" stroke="#455a64" stroke-width="2.200" stroke-linecap="round" stroke-linejoin="round"/></svg>
<div class="t bt" style="left:1034px;letter-spacing:-.4px">Prev</div>
<div class="t bt" style="left:1128px;color:#424242;letter-spacing:1.5px">112/2298</div>
<div class="abs btn" style="left:1266px;width:122px"></div>
<div class="t bt" style="left:1284px;letter-spacing:.1px">Next</div>
<svg style="left:1355px;top:1476px" width="9" height="15"><path d="M1.500 1.500l6 6-6 6" fill="none" stroke="#455a64" stroke-width="2.200" stroke-linecap="round" stroke-linejoin="round"/></svg>

<div class="abs" id="runbtn"></div>
<svg style="left:1474px;top:1475px" width="14" height="17"><path d="M0.500 0.500v16l13-8z" fill="#455a64"/></svg>
<div class="t bt" style="left:1501px;letter-spacing:-.15px">Run Code</div>
<svg style="left:1631px;top:1478px" width="16" height="10"><path d="M1.500 8.500l6.500-6.500 6.500 6.500" fill="none" stroke="#455a64" stroke-width="2.400" stroke-linecap="round" stroke-linejoin="round"/></svg>
<div class="abs" id="submit"></div>
<div class="t bt" style="left:1807px;color:#fff;letter-spacing:.4px">Submit</div>
<div class="abs" style="left:0;top:1535px;width:2048px;height:1px;background:#c4c4c4"></div>





</body>
</html>
